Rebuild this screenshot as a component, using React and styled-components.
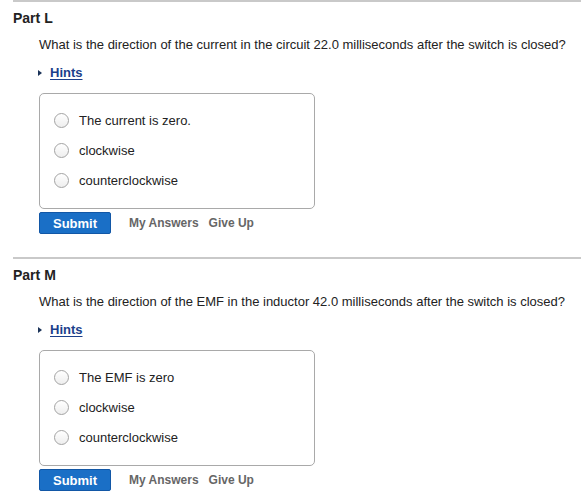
import React from "react";
import styled, { createGlobalStyle } from "styled-components";

const Global = createGlobalStyle`
  html, body { margin: 0; padding: 0; background: #fff; }
  body { font-family: "Liberation Sans", Arial, Helvetica, sans-serif; color: #222; }
  *, *::before, *::after { box-sizing: border-box; }
`;

const Page = styled.div`
  display: flex;
  flex-direction: column;
  padding-left: 13px;
`;

const Section = styled.section`
  border-top: 2px solid #c9c9c9;
  padding-top: 8px;
  padding-bottom: 23px;
`;

const Title = styled.h2`
  margin: 0;
  font-size: 14px;
  line-height: 16px;
  font-weight: bold;
  color: #222;
`;

const Body = styled.div`
  padding-left: 26px;
  display: flex;
  flex-direction: column;
  align-items: flex-start;
`;

const Question = styled.p`
  margin: 11px 0 0;
  font-size: 13px;
  line-height: 15px;
  color: #222;
`;

const Hints = styled.a`
  margin-top: 13px;
  margin-left: -1px;
  display: flex;
  align-items: center;
  gap: 8px;
  font-size: 13px;
  line-height: 15px;
  font-weight: bold;
  color: #1b3f8b;
  text-decoration: underline;
  text-underline-offset: 2px;
  cursor: pointer;
`;

const Caret = styled.span`
  width: 0;
  height: 0;
  border-top: 3.5px solid transparent;
  border-bottom: 3.5px solid transparent;
  border-left: 4.5px solid #1b3359;
`;

const Choices = styled.div`
  margin-top: 13px;
  width: 276px;
  border: 1px solid #a9a9a9;
  border-radius: 5px;
  padding: 11px 0 13px 14px;
  display: flex;
  flex-direction: column;
`;

const Choice = styled.label`
  height: 30px;
  display: flex;
  align-items: center;
  gap: 10px;
  font-size: 13px;
  color: #222;
  cursor: pointer;
`;

const Radio = styled.span`
  width: 15px;
  height: 15px;
  border-radius: 50%;
  border: 1px solid #a3a3a3;
  background: linear-gradient(#ffffff, #eeeeee);
  flex: none;
`;

const Actions = styled.div`
  margin-top: 3px;
  display: flex;
  align-items: center;
`;

const Submit = styled.button`
  width: 72px;
  height: 22px;
  border: 1px solid #1257a6;
  border-radius: 2px;
  background: #1a6fc6;
  color: #fff;
  font-family: "Liberation Sans", Arial, sans-serif;
  font-size: 13px;
  font-weight: bold;
  padding: 0;
  margin-right: 18px;
  cursor: pointer;
`;

const TextAction = styled.span`
  font-size: 12px;
  font-weight: bold;
  color: #666;
  margin-right: ${(p) => p.$gap || 0}px;
  cursor: pointer;
`;

const parts = [
  {
    id: "L",
    question:
      "What is the direction of the current in the circuit 22.0 milliseconds after the switch is closed?",
    options: ["The current is zero.", "clockwise", "counterclockwise"],
  },
  {
    id: "M",
    question:
      "What is the direction of the EMF in the inductor 42.0 milliseconds after the switch is closed?",
    options: ["The EMF is zero", "clockwise", "counterclockwise"],
  },
];

export default function App() {
  return (
    <>
      <Global />
      <Page>
        {parts.map((p) => (
          <Section key={p.id}>
            <Title>Part {p.id}</Title>
            <Body>
              <Question>{p.question}</Question>
              <Hints>
                <Caret />
                Hints
              </Hints>
              <Choices>
                {p.options.map((o) => (
                  <Choice key={o}>
                    <Radio />
                    {o}
                  </Choice>
                ))}
              </Choices>
              <Actions>
                <Submit>Submit</Submit>
                <TextAction $gap={10}>My Answers</TextAction>
                <TextAction>Give Up</TextAction>
              </Actions>
            </Body>
          </Section>
        ))}
      </Page>
    </>
  );
}
